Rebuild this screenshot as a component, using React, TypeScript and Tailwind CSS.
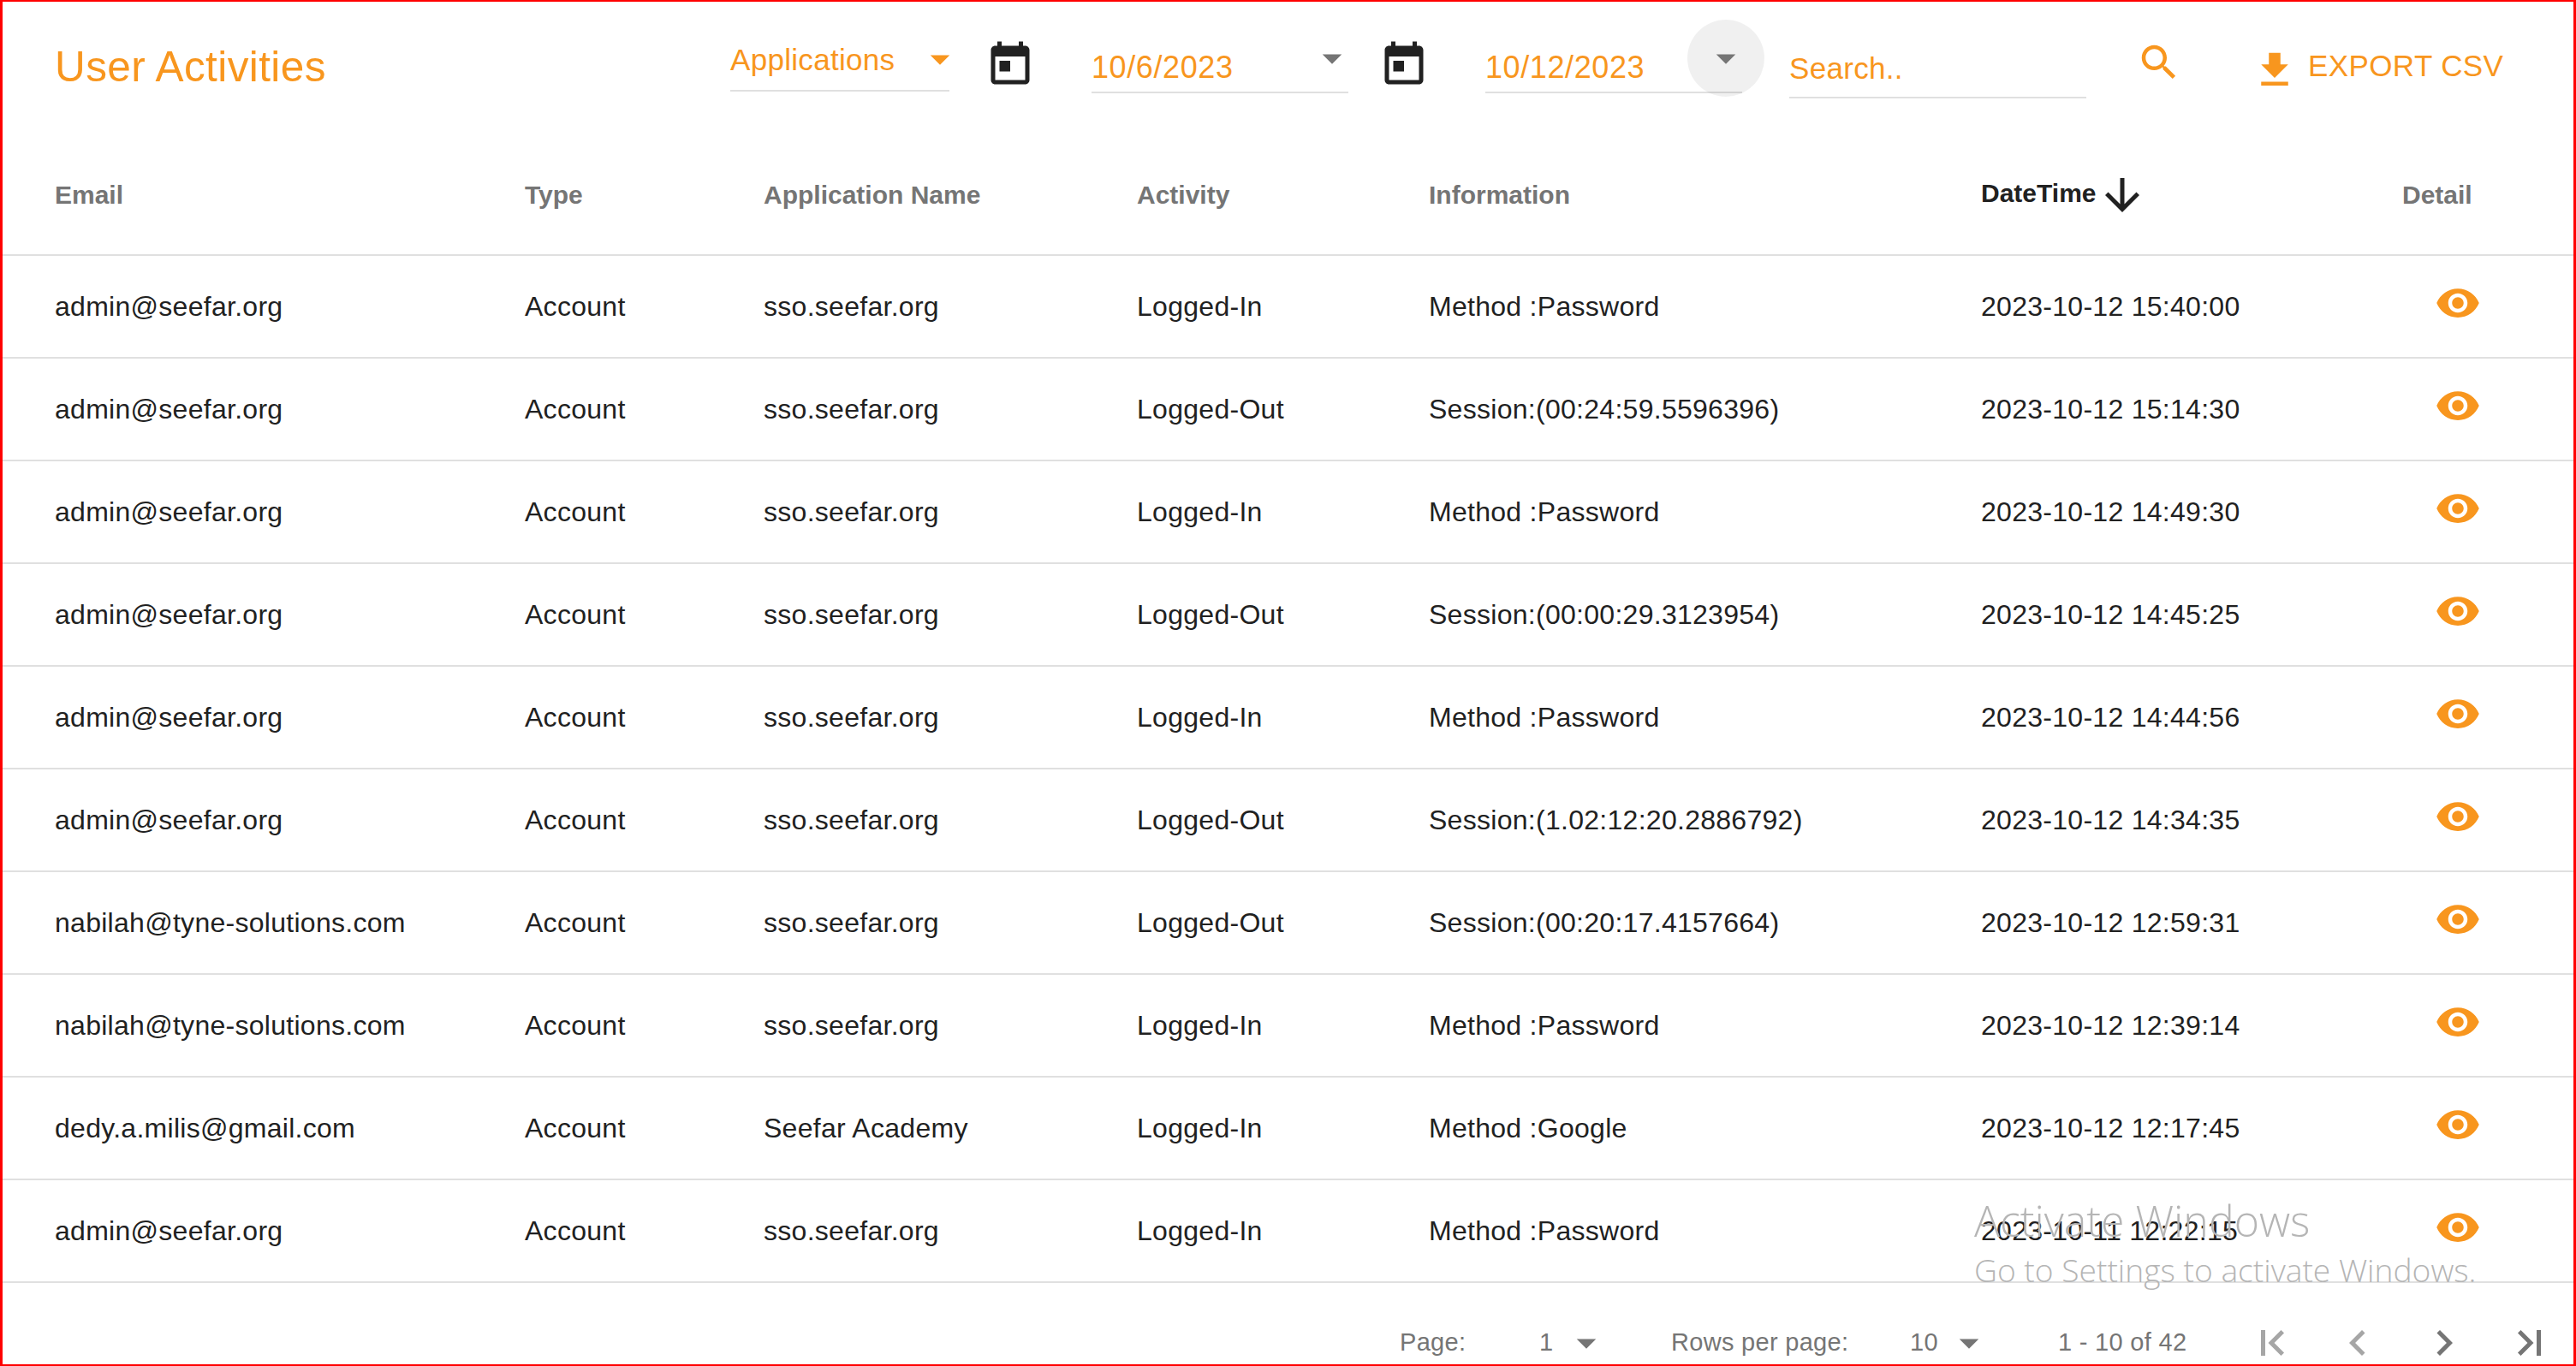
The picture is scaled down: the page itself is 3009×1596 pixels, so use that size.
const rows = [
  ['admin@seefar.org', 'sso.seefar.org', 'Logged-In', 'Method :Password', '2023-10-12 15:40:00'],
  ['admin@seefar.org', 'sso.seefar.org', 'Logged-Out', 'Session:(00:24:59.5596396)', '2023-10-12 15:14:30'],
  ['admin@seefar.org', 'sso.seefar.org', 'Logged-In', 'Method :Password', '2023-10-12 14:49:30'],
  ['admin@seefar.org', 'sso.seefar.org', 'Logged-Out', 'Session:(00:00:29.3123954)', '2023-10-12 14:45:25'],
  ['admin@seefar.org', 'sso.seefar.org', 'Logged-In', 'Method :Password', '2023-10-12 14:44:56'],
  ['admin@seefar.org', 'sso.seefar.org', 'Logged-Out', 'Session:(1.02:12:20.2886792)', '2023-10-12 14:34:35'],
  ['nabilah@tyne-solutions.com', 'sso.seefar.org', 'Logged-Out', 'Session:(00:20:17.4157664)', '2023-10-12 12:59:31'],
  ['nabilah@tyne-solutions.com', 'sso.seefar.org', 'Logged-In', 'Method :Password', '2023-10-12 12:39:14'],
  ['dedy.a.milis@gmail.com', 'Seefar Academy', 'Logged-In', 'Method :Google', '2023-10-12 12:17:45'],
  ['admin@seefar.org', 'sso.seefar.org', 'Logged-In', 'Method :Password', '2023-10-11 12:22:15'],
];

const paths = {
  today: 'M19 3h-1V1h-2v2H8V1H6v2H5c-1.11 0-1.99.9-1.99 2L3 19c0 1.1.89 2 2 2h14c1.1 0 2-.9 2-2V5c0-1.1-.9-2-2-2zm0 16H5V8h14v11zM7 10h5v5H7z',
  drop: 'M7 10l5 5 5-5z',
  search: 'M15.5 14h-.79l-.28-.27C15.41 12.59 16 11.11 16 9.5 16 5.91 13.09 3 9.5 3S3 5.91 3 9.5 5.91 16 9.5 16c1.61 0 3.09-.59 4.23-1.57l.27.28v.79l5 4.99L20.49 19l-4.99-5zm-6 0C7.01 14 5 11.99 5 9.5S7.01 5 9.5 5 14 7.01 14 9.5 11.99 14 9.5 14z',
  download: 'M19 9h-4V3H9v6H5l7 7 7-7zM5 18v2h14v-2H5z',
  arrowDown: 'M20 12l-1.41-1.41L13 16.17V4h-2v12.17l-5.58-5.6L4 12l8 8 8-8z',
  eye: 'M12 4.5C7 4.5 2.73 7.61 1 12c1.73 4.39 6 7.5 11 7.5s9.27-3.11 11-7.5c-1.73-4.39-6-7.5-11-7.5zM12 17c-2.76 0-5-2.24-5-5s2.24-5 5-5 5 2.24 5 5-2.24 5-5 5zm0-8c-1.66 0-3 1.34-3 3s1.34 3 3 3 3-1.34 3-3-1.34-3-3-3z',
  first: 'M18.41 16.59L13.82 12l4.59-4.59L17 6l-6 6 6 6zM7.6 6h2v12h-2z',
  prev: 'M15.41 16.59L10.83 12l4.58-4.59L14 6l-6 6 6 6z',
  next: 'M8.59 16.59L13.17 12 8.59 7.41 10 6l6 6-6 6z',
  last: 'M5.59 7.41L10.18 12l-4.59 4.59L7 18l6-6-6-6zM14.4 6h2v12h-2z',
};

function Icon({ d, className }: { d: string; className: string }) {
  return (
    <svg viewBox="0 0 24 24" fill="currentColor" className={`shrink-0 ${className}`}>
      <path d={d} />
    </svg>
  );
}

const gridCols = 'grid grid-cols-[610px_279px_436px_341px_645px_492px_1fr]';

function DateField({ value, active, className }: { value: string; active?: boolean; className: string }) {
  return (
    <div className={`relative mt-[45px] h-[62px] w-[300px] border-b-2 border-[#e0e0e0] text-[36px] leading-[64px] tracking-[0.6px] text-[#f8961e] ${className}`}>
      {value}
      <div className={`absolute -right-[26px] -top-[24px] flex h-[90px] w-[90px] items-center justify-center rounded-full ${active ? 'bg-black/[0.06]' : ''}`}>
        <Icon d={paths.drop} className="h-[54px] w-[54px] text-[#757575]" />
      </div>
    </div>
  );
}

export default function App() {
  return (
    <div className="relative h-[1596px] w-[3009px] overflow-hidden border-x-[3px] border-y-2 border-[#ff0000] bg-white font-['Liberation_Sans',Arial,sans-serif]">
      <div className="flex h-[138px] items-start pl-[61px]">
        <div className="mt-[46px] w-[789px] text-[49.5px] leading-[60px] tracking-[0.4px] text-[#f8961e]">User Activities</div>
        <div className="relative mt-[38px] h-[67px] w-[256px] border-b-2 border-[#e0e0e0] text-[35px] leading-[60px] tracking-[0.3px] text-[#f8961e]">
          Applications
          <Icon d={paths.drop} className="absolute -right-[16px] top-[2px] h-[54px] w-[54px]" />
        </div>
        <Icon d={paths.today} className="ml-[41px] mt-[44px] h-[60px] w-[60px] text-[#212121]" />
        <DateField value="10/6/2023" className="ml-[65px]" />
        <Icon d={paths.today} className="ml-[35px] mt-[44px] h-[60px] w-[60px] text-[#212121]" />
        <DateField value="10/12/2023" active className="ml-[65px]" />
        <div className="ml-[55px] mt-[48px] h-[65px] w-[347px] border-b-2 border-[#e0e0e0] text-[35px] leading-[60px] tracking-[0.3px] text-[#f8961e]">Search..</div>
        <Icon d={paths.search} className="ml-[58px] mt-[44px] h-[54px] w-[54px] text-[#f8961e]" />
        <Icon d={paths.download} className="ml-[81px] mt-[53px] h-[54px] w-[54px] text-[#f8961e]" />
        <div className="ml-[12px] mt-[45px] text-[35px] leading-[60px] tracking-[0.4px] text-[#f8961e]">EXPORT CSV</div>
      </div>

      <div className={`${gridCols} h-[159px] items-center border-b-2 border-[#e0e0e0] pt-[18px] text-[30px] font-bold leading-[40px] text-[#757575]`}>
        <div className="pl-[61px]">Email</div>
        <div>Type</div>
        <div>Application Name</div>
        <div>Activity</div>
        <div>Information</div>
        <div className="flex items-center text-[#212121]">
          <span className="-mt-[4px]">DateTime</span>
          <Icon d={paths.arrowDown} className="-my-[10px] h-[60px] w-[60px]" />
        </div>
        <div>Detail</div>
      </div>

      {rows.map((r, i) => (
        <div key={i} className={`${gridCols} h-[120px] items-center border-b-2 border-[#e0e0e0] text-[32px] leading-[40px] tracking-[0.28px] text-[#212121]`}>
          <div className="pl-[61px]">{r[0]}</div>
          <div>Account</div>
          <div>{r[1]}</div>
          <div>{r[2]}</div>
          <div>{r[3]}</div>
          <div>{r[4]}</div>
          <div className="pb-[9px] pl-[38px]">
            <Icon d={paths.eye} className="block h-[54px] w-[54px] text-[#f8961e]" />
          </div>
        </div>
      ))}

      <div className="flex h-[95px] items-center pl-[1632px] pt-[44px] text-[29px] tracking-[0.3px] text-[#757575]">
        <div className="w-[163px]">Page:</div>
        <div className="w-[16px]">1</div>
        <Icon d={paths.drop} className="ml-[12px] h-[54px] w-[54px]" />
        <div className="ml-[72px] w-[279px]">Rows per page:</div>
        <div className="w-[32px]">10</div>
        <Icon d={paths.drop} className="ml-[10px] h-[54px] w-[54px]" />
        <div className="ml-[77px] w-[218px]">1 - 10 of 42</div>
        <div className="flex">
          <Icon d={paths.first} className="h-[60px] w-[60px] text-[#a6a6a6]" />
          <Icon d={paths.prev} className="ml-[42px] h-[60px] w-[60px] text-[#a6a6a6]" />
          <Icon d={paths.next} className="ml-[41px] h-[60px] w-[60px]" />
          <Icon d={paths.last} className="ml-[42px] h-[60px] w-[60px]" />
        </div>
      </div>

      <div className="pointer-events-none absolute left-[2303px] top-[1394px] font-['Open_Sans',sans-serif] font-light text-[#b5b5b5]">
        <div className="text-[50px] leading-[60px]">Activate Windows</div>
        <div className="mt-[6px] text-[37.2px] leading-[44px]">Go to Settings to activate Windows.</div>
      </div>
    </div>
  );
}
